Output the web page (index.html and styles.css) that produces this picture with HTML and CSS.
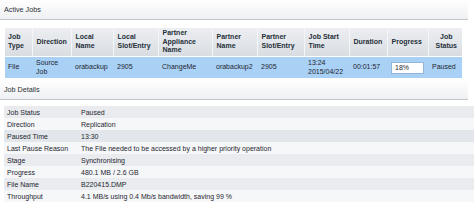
FILE: index.html
```html
<!DOCTYPE html>
<html lang="en">
<head>
    <meta charset="UTF-8">
    <title>Active Jobs</title>
    <link rel="stylesheet" href="styles.css">
</head>
<body>
    <div class="section-header">Active Jobs</div>

    <table class="jobs-table">
        <colgroup>
            <col style="width: 27px">
            <col style="width: 39px">
            <col style="width: 42px">
            <col style="width: 45px">
            <col style="width: 54px">
            <col style="width: 45px">
            <col style="width: 47px">
            <col style="width: 45px">
            <col style="width: 38px">
            <col style="width: 41px">
            <col style="width: 34px">
        </colgroup>
        <thead>
            <tr>
                <th>Job<br>Type</th>
                <th>Direction</th>
                <th>Local<br>Name</th>
                <th>Local<br>Slot/Entry</th>
                <th>Partner<br>Appliance<br>Name</th>
                <th>Partner<br>Name</th>
                <th>Partner<br>Slot/Entry</th>
                <th>Job Start<br>Time</th>
                <th>Duration</th>
                <th>Progress</th>
                <th class="centered">Job<br>Status</th>
            </tr>
        </thead>
        <tbody>
            <tr class="selected">
                <td>File</td>
                <td>Source<br>Job</td>
                <td>orabackup</td>
                <td>2905</td>
                <td>ChangeMe</td>
                <td>orabackup2</td>
                <td>2905</td>
                <td>13:24<br>2015/04/22</td>
                <td>00:01:57</td>
                <td><div class="progress-box">18%</div></td>
                <td>Paused</td>
            </tr>
        </tbody>
    </table>

    <div class="section-header">Job Details</div>

    <table class="details-table">
        <tr><td class="label">Job Status</td><td>Paused</td></tr>
        <tr><td class="label">Direction</td><td>Replication</td></tr>
        <tr class="hover"><td class="label">Paused Time</td><td>13:30</td></tr>
        <tr><td class="label">Last Pause Reason</td><td>The File needed to be accessed by a higher priority operation</td></tr>
        <tr><td class="label">Stage</td><td>Synchronising</td></tr>
        <tr><td class="label">Progress</td><td>480.1 MB / 2.6 GB</td></tr>
        <tr><td class="label">File Name</td><td>B220415.DMP</td></tr>
        <tr><td class="label">Throughput</td><td>4.1 MB/s using 0.4 Mb/s bandwidth, saving 99 %</td></tr>
    </table>
</body>
</html>
```

FILE: styles.css
```css
body {
    margin: 0;
    background: #ffffff;
    font-family: "Liberation Sans", Arial, sans-serif;
    font-size: 7px;
    color: #1e2630;
}

.section-header {
    width: 464px;
    height: 19px;
    line-height: 20px;
    padding-left: 4px;
    background: linear-gradient(#ffffff, #eef0f3);
    border-bottom: 1px solid #c3c6ca;
    font-size: 7.2px;
    color: #2a2f35;
}

.jobs-table {
    margin: 8px 0 2px 5px;
    border-collapse: collapse;
    table-layout: fixed;
    width: 457px;
}

.jobs-table th {
    height: 28px;
    padding: 0 2px 0 4px;
    text-align: left;
    font-weight: bold;
    line-height: 8.6px;
    color: #26303a;
    background: linear-gradient(#eceef1, #d9dde2);
    border-left: 1px solid #f4f5f7;
    border-bottom: 1px solid #ffffff;
}

.jobs-table th:first-child {
    border-left: none;
    padding-left: 3px;
}

.jobs-table th.centered {
    text-align: center;
}

.jobs-table td {
    height: 21px;
    padding: 0 2px 0 4px;
    line-height: 8.6px;
    white-space: nowrap;
}

.jobs-table td:first-child {
    padding-left: 3px;
}

.selected td {
    background: #a9d0f5;
}

.progress-box {
    width: 28px;
    height: 10px;
    line-height: 10px;
    padding-left: 3px;
    background: #ffffff;
    border: 1px solid #93b6d8;
}

.details-table {
    margin: 6px 0 0 4px;
    border-collapse: collapse;
    width: 470px;
}

.details-table td {
    height: 12px;
    padding: 0 0 0 3px;
    white-space: nowrap;
}

.details-table td.label {
    width: 71px;
}

.details-table tr:nth-child(odd) td {
    background: #e9ebee;
}

.details-table tr:nth-child(even) td {
    background: #f6f7f9;
}

.details-table tr.hover td {
    background: #e3e6ea;
}
```
